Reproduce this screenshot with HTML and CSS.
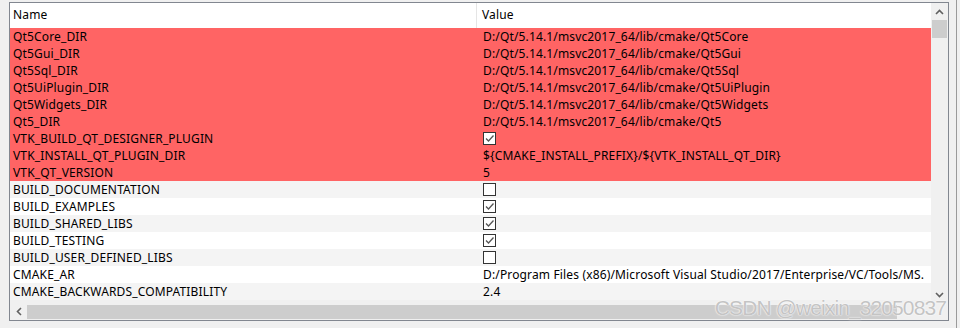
FILE: index.html
```html
<!DOCTYPE html>
<html>
<head>
<meta charset="utf-8">
<link rel="stylesheet" href="styles.css">
</head>
<body>
<div class="page">
  <div class="frame">
    <div class="main">
      <div class="header">
        <div class="hcell name-col">Name</div>
        <div class="hcell value-col">Value</div>
      </div>
      <div class="rows">
        <div class="row red"><div class="name-col">Qt5Core_DIR</div><div class="value-col">D:/Qt/5.14.1/msvc2017_64/lib/cmake/Qt5Core</div></div>
        <div class="row red"><div class="name-col">Qt5Gui_DIR</div><div class="value-col">D:/Qt/5.14.1/msvc2017_64/lib/cmake/Qt5Gui</div></div>
        <div class="row red"><div class="name-col">Qt5Sql_DIR</div><div class="value-col">D:/Qt/5.14.1/msvc2017_64/lib/cmake/Qt5Sql</div></div>
        <div class="row red"><div class="name-col">Qt5UiPlugin_DIR</div><div class="value-col">D:/Qt/5.14.1/msvc2017_64/lib/cmake/Qt5UiPlugin</div></div>
        <div class="row red"><div class="name-col">Qt5Widgets_DIR</div><div class="value-col">D:/Qt/5.14.1/msvc2017_64/lib/cmake/Qt5Widgets</div></div>
        <div class="row red"><div class="name-col">Qt5_DIR</div><div class="value-col">D:/Qt/5.14.1/msvc2017_64/lib/cmake/Qt5</div></div>
        <div class="row red"><div class="name-col">VTK_BUILD_QT_DESIGNER_PLUGIN</div><div class="value-col"><span class="cb checked"><svg viewBox="0 0 11 11" width="11" height="11"><path d="M2 5.5 L4.5 8 L9.5 2.5" fill="none" stroke="#555" stroke-width="1.3"/></svg></span></div></div>
        <div class="row red"><div class="name-col">VTK_INSTALL_QT_PLUGIN_DIR</div><div class="value-col">${CMAKE_INSTALL_PREFIX}/${VTK_INSTALL_QT_DIR}</div></div>
        <div class="row red"><div class="name-col">VTK_QT_VERSION</div><div class="value-col">5</div></div>
        <div class="row alt"><div class="name-col">BUILD_DOCUMENTATION</div><div class="value-col"><span class="cb"></span></div></div>
        <div class="row"><div class="name-col">BUILD_EXAMPLES</div><div class="value-col"><span class="cb checked"><svg viewBox="0 0 11 11" width="11" height="11"><path d="M2 5.5 L4.5 8 L9.5 2.5" fill="none" stroke="#555" stroke-width="1.3"/></svg></span></div></div>
        <div class="row alt"><div class="name-col">BUILD_SHARED_LIBS</div><div class="value-col"><span class="cb checked"><svg viewBox="0 0 11 11" width="11" height="11"><path d="M2 5.5 L4.5 8 L9.5 2.5" fill="none" stroke="#555" stroke-width="1.3"/></svg></span></div></div>
        <div class="row"><div class="name-col">BUILD_TESTING</div><div class="value-col"><span class="cb checked"><svg viewBox="0 0 11 11" width="11" height="11"><path d="M2 5.5 L4.5 8 L9.5 2.5" fill="none" stroke="#555" stroke-width="1.3"/></svg></span></div></div>
        <div class="row alt"><div class="name-col">BUILD_USER_DEFINED_LIBS</div><div class="value-col"><span class="cb"></span></div></div>
        <div class="row"><div class="name-col">CMAKE_AR</div><div class="value-col">D:/Program Files (x86)/Microsoft Visual Studio/2017/Enterprise/VC/Tools/MS.</div></div>
        <div class="row alt"><div class="name-col">CMAKE_BACKWARDS_COMPATIBILITY</div><div class="value-col">2.4</div></div>
      </div>
    </div>
    <div class="vscroll">
      <div class="arrow"><svg viewBox="0 0 9 6" width="9" height="6"><path d="M1 5 L4.5 1.5 L8 5" fill="none" stroke="#606060" stroke-width="1.6"/></svg></div>
      <div class="vthumb"></div>
      <div class="vtrack"></div>
      <div class="arrow"><svg viewBox="0 0 9 6" width="9" height="6"><path d="M1 1 L4.5 4.5 L8 1" fill="none" stroke="#606060" stroke-width="1.6"/></svg></div>
    </div>
    <div class="hscroll">
      <div class="harrow"><svg viewBox="0 0 6 9" width="6" height="9"><path d="M5 1 L1.5 4.5 L5 8" fill="none" stroke="#606060" stroke-width="1.6"/></svg></div>
      <div class="hthumb"></div>
      <div class="htrack"></div>
    </div>
    <div class="corner"></div>
    <div class="watermark">CSDN @weixin_32050837</div>
  </div>
  <div class="side"></div>
</div>
</body>
</html>
```
FILE: styles.css
```css
html, body {
  margin: 0;
  padding: 0;
  background: #f0f0f0;
}
.page {
  display: flex;
  height: 328px;
  overflow: hidden;
}
.frame {
  position: relative;
  margin: 2px 0 0 9px;
  width: 938px;
  height: 317px;
  border: 1px solid #828790;
  display: grid;
  grid-template-columns: 921px 17px;
  grid-template-rows: 300px 17px;
  font-family: "Noto Sans", "Liberation Sans", sans-serif;
  font-size: 12px;
  letter-spacing: 0.15px;
  color: #000;
}
.main {
  background: #f0f0f0;
  overflow: hidden;
}
.header {
  display: flex;
  height: 25px;
  background: #fff;
  align-items: center;
}
.hcell {
  height: 25px;
  line-height: 24px;
}
.name-col {
  width: 467px;
  padding-left: 3px;
  box-sizing: border-box;
  white-space: nowrap;
  overflow: hidden;
}
.value-col {
  flex: 1;
  padding-left: 6px;
  white-space: nowrap;
  overflow: hidden;
}
.header .name-col {
  border-right: 1px solid #e5e5e5;
}
.header .value-col {
  padding-left: 5px;
}
.rows {
  display: flex;
  flex-direction: column;
}
.row {
  display: flex;
  height: 17px;
  line-height: 17px;
  background: #fff;
}
.row.alt {
  background: #f4f4f4;
}
.row.red {
  background: #ff6464;
}
.row .value-col {
  display: flex;
  align-items: center;
}
.cb {
  display: inline-flex;
  align-items: center;
  justify-content: center;
  width: 13px;
  height: 13px;
  box-sizing: border-box;
  border: 1px solid #333;
  background: #fff;
}
.vscroll {
  background: #f0f0f0;
  display: flex;
  flex-direction: column;
  align-items: center;
}
.arrow {
  height: 17px;
  width: 17px;
  display: flex;
  align-items: center;
  justify-content: center;
}
.vthumb {
  width: 15px;
  height: 18px;
  background: #cdcdcd;
}
.vtrack {
  flex: 1;
}
.hscroll {
  background: #f0f0f0;
  display: flex;
  align-items: center;
}
.harrow {
  width: 17px;
  height: 17px;
  display: flex;
  align-items: center;
  justify-content: center;
}
.hthumb {
  width: 870px;
  height: 14px;
  margin-top: 1px;
  background: #cdcdcd;
}
.htrack {
  flex: 1;
}
.corner {
  background: #f0f0f0;
}
.watermark {
  position: absolute;
  right: 2px;
  bottom: 0px;
  font-family: "Liberation Sans", "DejaVu Sans", sans-serif;
  font-size: 21px;
  color: #c4c4c4;
  text-shadow: 0 0 1px #fff, 0 0 2px #fff;
  white-space: nowrap;
  letter-spacing: -0.9px;
}
.side {
  margin-left: 7px;
  width: 5px;
  border-left: 1px solid #9a9a9a;
  background: #f0f0f0;
}
```
